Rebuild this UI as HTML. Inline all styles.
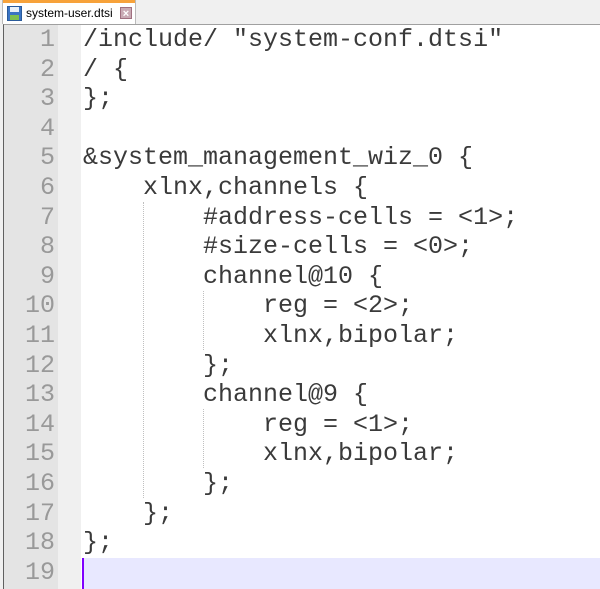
<!DOCTYPE html>
<html><head><style>
body{margin:0;width:600px;height:588px;overflow:hidden;background:#f0f0f0;font-family:"Liberation Sans",sans-serif;position:relative}
.tab{position:absolute;left:2px;top:0;width:132px;height:24px;background:#fff;border-left:1px solid #bbb;border-right:1px solid #bbb}
.tab .bar{position:absolute;left:0;right:0;top:0;height:3px;background:#f7a23a}
.tab .t{position:absolute;left:23px;top:6px;font-size:12px;color:#000}
.close{position:absolute;left:117px;top:7px;width:12px;height:12px;background:#c9aab4;border:1px solid #a07080;color:#fff;font-size:11px;line-height:12px;text-align:center;font-weight:bold;box-sizing:border-box}
.ed{position:absolute;left:3px;top:24px;width:597px;height:564px;background:#fff;border-top:1px solid #a0a0a0;border-left:1px solid #606060}
.g1{position:absolute;left:0;top:0;width:54px;height:100%;background:#e4e4e4}
.g2{position:absolute;left:54px;top:0;width:23px;height:100%;background:#f0f0f0}
.line{position:absolute;left:0;width:597px;height:29.6px;font-family:"Liberation Mono",monospace;font-size:25px;line-height:29.6px;white-space:pre;color:#3a3a3a}
.num{position:absolute;left:0;width:51px;text-align:right;color:#999}
.code{position:absolute;left:79px}
.cur{background:#e8e8ff}
.cur .caret{position:absolute;left:78px;top:0;width:2px;height:100%;background:#8000ff}
.guide{position:absolute;width:0;border-left:1px dotted #c0c0c0}
</style></head><body>
<div class="tab"><div class="bar"></div>
<svg style="position:absolute;left:4px;top:6px" width="15" height="15" viewBox="0 0 15 15"><rect x="0.5" y="0.5" width="14" height="14" fill="#3a74c4" stroke="#2a5a9a"/><rect x="3" y="1" width="9" height="5" fill="#e8f0fa"/><rect x="3" y="9" width="9" height="5" fill="#7ec050"/></svg>
<div class="t">system-user.dtsi</div><div class="close">×</div></div>
<div class="ed">
<div class="g1"></div><div class="g2"></div>
<div class="guide" style="left:139px;top:177px;height:296px"></div>
<div class="guide" style="left:199px;top:266px;height:59px"></div>
<div class="guide" style="left:199px;top:384px;height:59px"></div>
<div class="line" style="top:0"><span class="num">1</span><span class="code">/include/ "system-conf.dtsi"</span></div>
<div class="line" style="top:29.6px"><span class="num">2</span><span class="code">/ {</span></div>
<div class="line" style="top:59.2px"><span class="num">3</span><span class="code">};</span></div>
<div class="line" style="top:88.8px"><span class="num">4</span><span class="code"></span></div>
<div class="line" style="top:118.4px"><span class="num">5</span><span class="code">&amp;system_management_wiz_0 {</span></div>
<div class="line" style="top:148px"><span class="num">6</span><span class="code">    xlnx,channels {</span></div>
<div class="line" style="top:177.6px"><span class="num">7</span><span class="code">        #address-cells = &lt;1&gt;;</span></div>
<div class="line" style="top:207.2px"><span class="num">8</span><span class="code">        #size-cells = &lt;0&gt;;</span></div>
<div class="line" style="top:236.8px"><span class="num">9</span><span class="code">        channel@10 {</span></div>
<div class="line" style="top:266.4px"><span class="num">10</span><span class="code">            reg = &lt;2&gt;;</span></div>
<div class="line" style="top:296px"><span class="num">11</span><span class="code">            xlnx,bipolar;</span></div>
<div class="line" style="top:325.6px"><span class="num">12</span><span class="code">        };</span></div>
<div class="line" style="top:355.2px"><span class="num">13</span><span class="code">        channel@9 {</span></div>
<div class="line" style="top:384.8px"><span class="num">14</span><span class="code">            reg = &lt;1&gt;;</span></div>
<div class="line" style="top:414.4px"><span class="num">15</span><span class="code">            xlnx,bipolar;</span></div>
<div class="line" style="top:444px"><span class="num">16</span><span class="code">        };</span></div>
<div class="line" style="top:473.6px"><span class="num">17</span><span class="code">    };</span></div>
<div class="line" style="top:503.2px"><span class="num">18</span><span class="code">};</span></div>
<div class="line" style="top:532.8px;height:31px"><div class="cur" style="position:absolute;left:79px;right:0;top:0;bottom:0"></div><div class="cur"><div class="caret"></div></div><span class="num">19</span></div>
</div>
</body></html>
